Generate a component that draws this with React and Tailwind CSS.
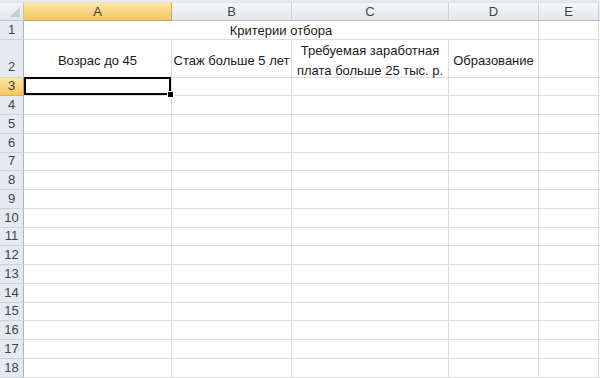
import React from 'react';

const cols = [
    { key: 'A', w: 'w-[148px]' },
    { key: 'B', w: 'w-[120px]' },
    { key: 'C', w: 'w-[157px]' },
    { key: 'D', w: 'w-[90px]' },
    { key: 'E', w: 'w-[60px]' },
];

const rowNums = [3, 4, 5, 6, 7, 8, 9, 10, 11, 12, 13, 14, 15, 16, 17, 18];

function RowHeader({ n, active, tall }) {
    return (
        <div
            className={`w-[24px] shrink-0 flex items-end justify-center border-r border-b text-[13px] leading-none ${
                tall ? 'pb-[4px]' : 'pb-[3px]'
            } ${
                active
                    ? 'bg-gradient-to-b from-[#fde7a8] to-[#f5c55a] border-r-[#c99a3e] border-b-[#e0b15a] text-[#303a45]'
                    : 'bg-[#e6eaef] border-r-[#a9b3bf] border-b-[#cdd3da] text-[#3c4450]'
            }`}
        >
            {n}
        </div>
    );
}

function Cell({ w, children, className = '' }) {
    return (
        <div className={`${w} shrink-0 border-r border-b border-[#dadcdf] ${className}`}>{children}</div>
    );
}

export default function App() {
    return (
        <div className="w-[600px] h-[378px] overflow-hidden bg-white text-[#1a1a1a] font-['Liberation_Sans',Arial,sans-serif]">
            {/* top edge */}
            <div className="h-[3px] bg-[#e8eaed] border-b border-[#dfe2e6]" />

            {/* column headers */}
            <div className="flex h-[18px]">
                <div className="w-[24px] shrink-0 relative bg-gradient-to-b from-[#f3f4f6] to-[#e2e6ea] border-r border-b border-[#b9c1ca]">
                    <svg className="absolute left-0 top-0" width="24" height="18" viewBox="0 0 24 18">
                        <polygon points="20,4 20,14 10,14" fill="#c6ccd3" />
                    </svg>
                </div>
                {cols.map((c) => (
                    <div
                        key={c.key}
                        className={`${c.w} shrink-0 flex items-center justify-center border-r border-b text-[13px] leading-none ${
                            c.key === 'A'
                                ? 'bg-gradient-to-b from-[#fde7a8] to-[#f5c55a] border-r-[#d5a853] border-b-[#d9a443] text-[#303a45]'
                                : 'bg-gradient-to-b from-[#f5f6f8] to-[#e3e7eb] border-r-[#cbd0d6] border-b-[#b9c1ca] text-[#3c4450]'
                        }`}
                    >
                        {c.key}
                    </div>
                ))}
                <div className="flex-1 bg-gradient-to-b from-[#f5f6f8] to-[#e3e7eb] border-b border-[#b9c1ca]" />
            </div>

            {/* row 1 */}
            <div className="flex h-[19px]">
                <RowHeader n={1} />
                <Cell w="w-[515px]" className="flex items-center justify-center text-[13px] pt-[1px]">
                    Критерии отбора
                </Cell>
                <Cell w="w-[60px]" />
                <div className="flex-1 border-b border-[#dadcdf]" />
            </div>

            {/* row 2 */}
            <div className="flex h-[37.5px]">
                <RowHeader n={2} tall />
                <Cell w="w-[148px]" className="flex items-center justify-center text-[13px] pt-[5px] whitespace-nowrap">
                    Возрас до 45
                </Cell>
                <Cell w="w-[120px]" className="flex items-center justify-center text-[13px] pt-[5px] whitespace-nowrap">
                    Стаж больше 5 лет
                </Cell>
                <Cell w="w-[157px]" className="flex flex-col items-center justify-center text-[13px] leading-[20px] pt-[5px]">
                    <span>Требуемая заработная</span>
                    <span>плата больше 25 тыс. р.</span>
                </Cell>
                <Cell w="w-[90px]" className="flex items-center justify-center text-[13px] pt-[5px]">
                    Образование
                </Cell>
                <Cell w="w-[60px]" />
                <div className="flex-1 border-b border-[#dadcdf]" />
            </div>

            {/* rows 3-18 */}
            {rowNums.map((n) => (
                <div key={n} className="flex h-[18.75px]">
                    <RowHeader n={n} active={n === 3} />
                    {cols.map((c) => (
                        <Cell key={c.key} w={c.w} className={n === 3 && c.key === 'A' ? 'relative' : ''}>
                            {n === 3 && c.key === 'A' && (
                                <>
                                    <div className="absolute left-0 -top-[1px] right-0 bottom-0 border-2 border-black" />
                                    <div className="absolute -right-[3px] -bottom-[3px] w-[7px] h-[7px] bg-black border border-white z-10" />
                                </>
                            )}
                        </Cell>
                    ))}
                    <div className="flex-1 border-b border-[#dadcdf]" />
                </div>
            ))}
        </div>
    );
}
